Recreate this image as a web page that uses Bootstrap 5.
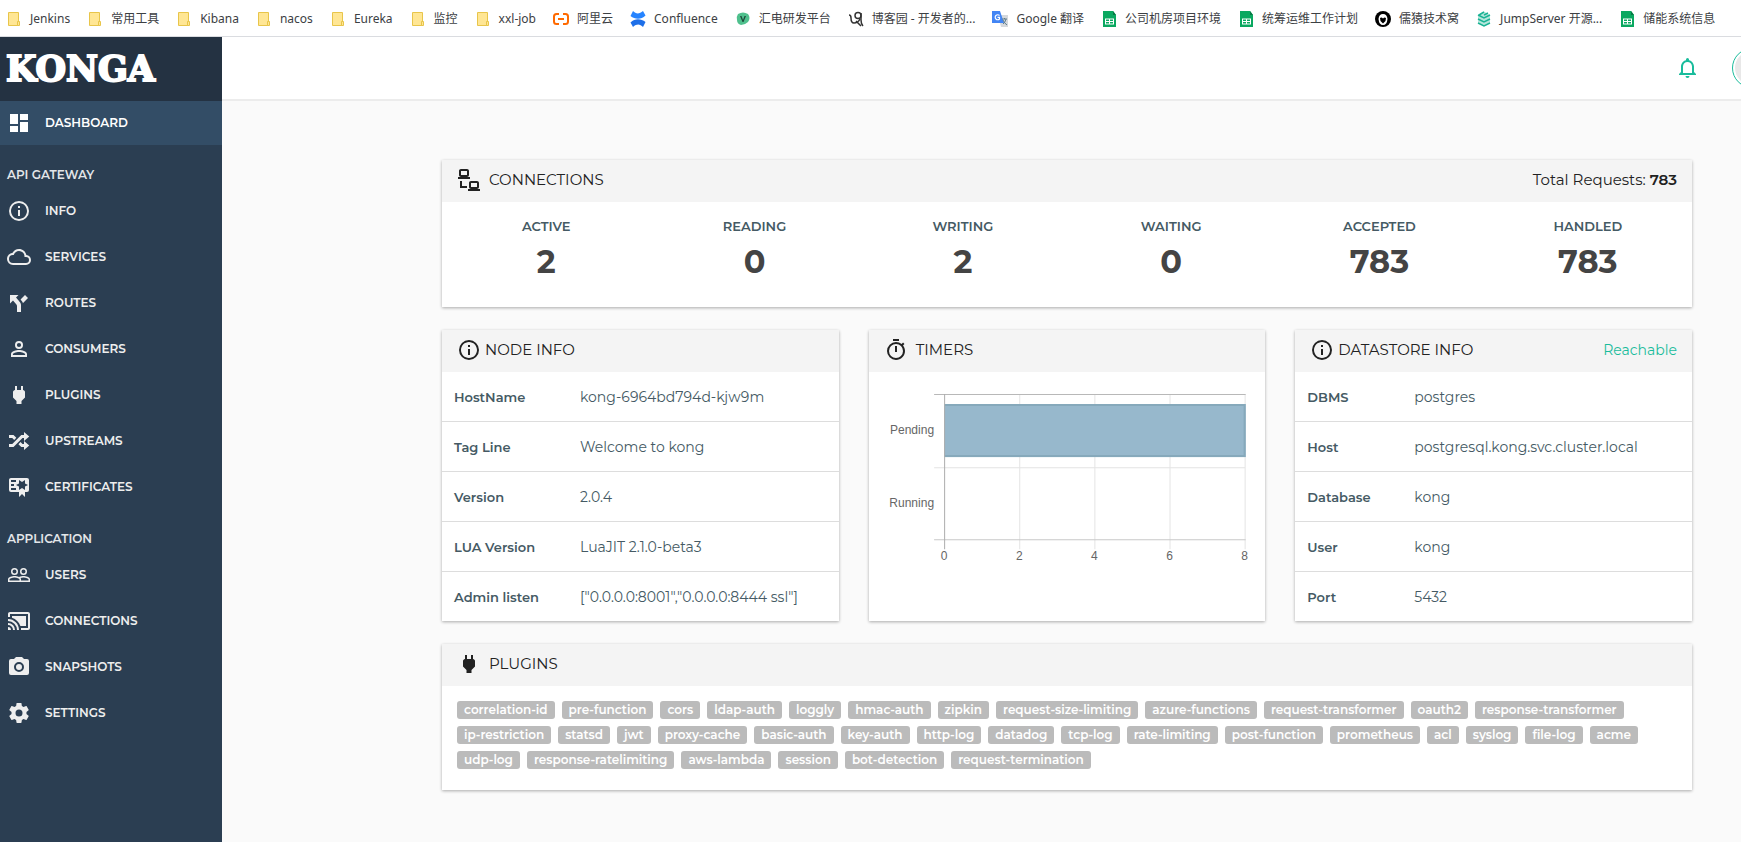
<!DOCTYPE html>
<html lang="en">
<head>
<meta charset="utf-8">
<meta name="viewport" content="width=device-width, initial-scale=1">
<title>Konga - Dashboard</title>
<link href="https://cdn.jsdelivr.net/npm/bootstrap@5.3.0/dist/css/bootstrap.min.css" rel="stylesheet">
<style>
  body { font-family: Montserrat, Inter, "Open Sans", sans-serif; font-size: 14px; line-height: 20px; color: #455a64; background: #fafafa; overflow-x: hidden; }
  a { text-decoration: none; }
  .ico { width: 24px; height: 24px; fill: currentColor; flex: none; }
  .bookmarks { height: 37px; gap: 17px; padding: 1px 6px 0; border-bottom: 1px solid #dadce0; font: 12px/16px "Noto Sans", "Noto Sans CJK SC", sans-serif; overflow: hidden; }
  .bookmarks a { display: flex; align-items: center; gap: 8px; color: #3c4043; white-space: nowrap; }
  .bookmarks svg { width: 16px; height: 16px; flex: none; }
  .sidebar { width: 222px; background: #2b3e52; font-size: 12px; font-weight: 600; flex: none; }
  .brand { height: 64px; padding-left: 6px; background: #243242; color: #fff; font: bold 35px/64px "DejaVu Serif", serif; -webkit-text-stroke: 2px #fff; }
  .sidebar .nav-link { height: 44px; margin-bottom: 2px; padding: 0 7px; gap: 14px; display: flex; align-items: center; color: #eee; }
  .sidebar .nav-link.active { background: #334d66; color: #fff; }
  .section-name { padding: 18px 7px 4px; color: #e3e6e9; }
  .topbar { height: 64px; background: #fff; border-bottom: 2px solid #ececec; overflow: hidden; }
  .topbar button { color: #1abc9c; background: none; border: 0; padding: 0; margin-right: 32px; }
  .avatar { width: 40px; height: 40px; border: 1px solid #1abc9c; border-radius: 50%; padding: 2px; margin-right: -31px; flex: none; }
  .avatar span { display: block; height: 100%; border-radius: 50%; background: #e8e8e8; }
  .content { padding: 59px 49px 40px 220px; gap: 23px; }
  .panel { background: #fff; box-shadow: 0 1px 3px rgba(0,0,0,.32); height: 100%; }
  .panel-head { height: 42px; padding: 0 15px 2px; background: #f4f4f4; color: #222; font-size: 15px; }
  .panel-head h2 { font-size: 15px; line-height: 20px; font-weight: 400; margin: 0; }
  .panel-head b { font-weight: 600; }
  .reachable { color: #1abc9c; font-size: 14px; }
  .stats { padding: 14px 0 29px; font-size: 13px; font-weight: 600; }
  .stat-value { font-size: 32px; line-height: 32px; font-weight: 700; color: #444; margin-top: 10px; }
  .facts th, .facts td { height: 50px; padding: 2px 12px 0; vertical-align: middle; border-top: 1px solid #ddd; }
  .facts tr:first-child > * { border-top: 0; height: 49px; }
  .facts th { font-size: 13px; font-weight: 600; white-space: nowrap; }
  .key-wide { width: 126px; } .key-slim { width: 107px; }
  .facts td { white-space: nowrap; }
  .chart { padding: 15px; }
  .chart svg { display: block; width: 100%; font: 12px "Liberation Sans", Arial, sans-serif; fill: #666; }
  .grid3 { --bs-gutter-x: 30px; --bs-gutter-y: 23px; }
  .tags { padding: 15px 40px 21px 15px; gap: 7px; }
  .tag { background: #bbb; color: #fff; font-size: 12px; line-height: 18px; font-weight: 600; padding: 0 7px; border-radius: 3px; }
</style>
</head>
<body class="d-flex flex-column min-vh-100">
<svg class="d-none">
  <symbol id="i-folder" viewBox="0 0 16 16"><path d="M2.500 1.500h10v13h-10z" fill="#ffe694" stroke="#e8c54a"/><path d="M11.500 10.500h2v4h-2z" fill="#ffe694" stroke="#e8c54a"/></symbol>
  <symbol id="i-sheet" viewBox="0 0 16 16"><path d="M2 0h10l3 4v12H2z" fill="#0aa860"/><path d="M12 0l3 4h-3z" fill="#067a45"/><path d="M4 7.500h9v6H4z" fill="#fff"/><path d="M5 8.500h3v1.600H5zM9 8.500h3v1.600H9zM5 11h3v1.600H5zM9 11h3v1.600H9z" fill="#0aa860"/></symbol>
  <symbol id="i-dash" viewBox="0 0 24 24"><path d="M13,3V9H21V3M13,21H21V11H13M3,21H11V15H3M3,13H11V3H3V13Z"/></symbol>
  <symbol id="i-info" viewBox="0 0 24 24"><path d="M11,9H13V7H11M12,20C7.59,20 4,16.41 4,12C4,7.59 7.59,4 12,4C16.41,4 20,7.59 20,12C20,16.41 16.41,20 12,20M12,2A10,10 0 0,0 2,12A10,10 0 0,0 12,22A10,10 0 0,0 22,12A10,10 0 0,0 12,2M11,17H13V11H11V17Z"/></symbol>
  <symbol id="i-cloud" viewBox="0 0 24 24"><path d="M19,18H6A4,4 0 0,1 2,14A4,4 0 0,1 6,10H6.71C7.37,7.69 9.5,6 12,6A5.5,5.5 0 0,1 17.5,11.5V12H19A3,3 0 0,1 22,15A3,3 0 0,1 19,18M19.35,10.03C18.67,6.59 15.64,4 12,4C9.11,4 6.6,5.64 5.35,8.03C2.34,8.36 0,10.9 0,14A6,6 0 0,0 6,20H19A5,5 0 0,0 24,15C24,12.36 21.95,10.22 19.35,10.03Z"/></symbol>
  <symbol id="i-fork" viewBox="0 0 24 24"><path d="M3,4V12.5L6,9.5L9,13C10,14 10,15 10,15V21H14V14C14,14 14,13 13.47,12C12.94,11 12,10 12,10L9,6.58L11.5,4M18,4L13.54,8.47L14,9C14,9 14.93,10 15.47,11C15.68,11.4 15.8,11.79 15.87,12.13L21,7"/></symbol>
  <symbol id="i-user" viewBox="0 0 24 24"><path d="M12,13C9.33,13 4,14.33 4,17V20H20V17C20,14.33 14.67,13 12,13M12,4A4,4 0 0,0 8,8A4,4 0 0,0 12,12A4,4 0 0,0 16,8A4,4 0 0,0 12,4M12,14.9C14.97,14.9 18.1,16.36 18.1,17V18.1H5.9V17C5.9,16.36 9,14.9 12,14.9M12,5.9A2.1,2.1 0 0,1 14.1,8A2.1,2.1 0 0,1 12,10.1A2.1,2.1 0 0,1 9.9,8A2.1,2.1 0 0,1 12,5.9Z"/></symbol>
  <symbol id="i-plug" viewBox="0 0 24 24"><path d="M16,7V3H14V7H10V3H8V7H8C7,7 6,8 6,9V14.5L9.5,18V21H14.5V18L18,14.5V9C18,8 17,7 16,7Z"/></symbol>
  <symbol id="i-shuffle" viewBox="0 0 24 24"><path d="M17,3L22.25,7.5L17,12L22.25,16.5L17,21V18H14.26L11.44,15.18L13.56,13.06L15.5,15H17V12L17,9H15.5L6.5,18H2V15H5.26L14.26,6H17V3M2,6H6.5L9.32,8.82L7.2,10.94L5.26,9H2V6Z"/></symbol>
  <symbol id="i-cert" viewBox="0 0 24 24"><path d="M4,3C2.89,3 2,3.89 2,5V15A2,2 0 0,0 4,17H12V22L15,19L18,22V17H20A2,2 0 0,0 22,15V8L22,6V5A2,2 0 0,0 20,3H16V3H4M12,5L15,7L18,5V8.5L21,10L18,11.5V15L15,13L12,15V11.5L9,10L12,8.5V5M4,5H9V7H4V5M4,9H7V11H4V9M4,13H9V15H4V13Z"/></symbol>
  <symbol id="i-users" viewBox="0 0 24 24"><path d="M16.5,13C15.3,13 13.43,13.34 12,14C10.57,13.33 8.7,13 7.5,13C5.33,13 1,14.08 1,16.25V19H23V16.25C23,14.08 18.67,13 16.5,13M12.5,17.5H2.5V16.25C2.5,15.71 5.06,14.5 7.5,14.5C9.94,14.5 12.5,15.71 12.5,16.25V17.5M21.5,17.5H14V16.25C14,15.79 13.8,15.39 13.48,15.03C14.36,14.73 15.44,14.5 16.5,14.5C18.94,14.5 21.5,15.71 21.5,16.25V17.5M7.5,12A3.5,3.5 0 0,0 7.5,5A3.5,3.5 0 0,0 7.5,12M7.5,6.500A2,2 0 0,1 7.5,10.500A2,2 0 0,1 7.5,6.500M16.5,12A3.5,3.5 0 0,0 16.5,5A3.5,3.5 0 0,0 16.5,12M16.5,6.500A2,2 0 0,1 16.5,10.500A2,2 0 0,1 16.5,6.500Z"/></symbol>
  <symbol id="i-cast" viewBox="0 0 24 24"><path d="M21,3H3C1.89,3 1,3.89 1,5V8H3V5H21V19H14V21H21A2,2 0 0,0 23,19V5C23,3.89 22.1,3 21,3M1,10V12A9,9 0 0,1 10,21H12C12,14.92 7.07,10 1,10M19,7H5V8.63C8.96,9.91 12.09,13.04 13.37,17H19M1,14V16A5,5 0 0,1 6,21H8A7,7 0 0,0 1,14M1,18V21H4A3,3 0 0,0 1,18Z"/></symbol>
  <symbol id="i-camera" viewBox="0 0 24 24"><path d="M4,4H7L9,2H15L17,4H20A2,2 0 0,1 22,6V18A2,2 0 0,1 20,20H4A2,2 0 0,1 2,18V6A2,2 0 0,1 4,4M12,7A5,5 0 0,0 7,12A5,5 0 0,0 12,17A5,5 0 0,0 17,12A5,5 0 0,0 12,7M12,9A3,3 0 0,1 15,12A3,3 0 0,1 12,15A3,3 0 0,1 9,12A3,3 0 0,1 12,9Z"/></symbol>
  <symbol id="i-gear" viewBox="0 0 24 24"><path d="M12,15.5A3.5,3.5 0 0,1 8.5,12A3.5,3.5 0 0,1 12,8.5A3.5,3.5 0 0,1 15.5,12A3.5,3.5 0 0,1 12,15.5M19.43,12.97C19.47,12.65 19.5,12.33 19.5,12C19.5,11.67 19.47,11.34 19.43,11L21.54,9.37C21.73,9.22 21.78,8.95 21.66,8.73L19.66,5.27C19.54,5.05 19.27,4.96 19.05,5.05L16.56,6.05C16.04,5.66 15.5,5.32 14.87,5.07L14.5,2.42C14.46,2.18 14.25,2 14,2H10C9.75,2 9.54,2.18 9.5,2.42L9.13,5.07C8.5,5.32 7.96,5.66 7.44,6.05L4.95,5.05C4.73,4.96 4.46,5.05 4.34,5.27L2.34,8.73C2.21,8.95 2.27,9.22 2.46,9.37L4.57,11C4.53,11.34 4.5,11.67 4.5,12C4.5,12.33 4.53,12.65 4.57,12.97L2.46,14.63C2.27,14.78 2.21,15.05 2.34,15.27L4.34,18.73C4.46,18.95 4.73,19.03 4.95,18.95L7.44,17.94C7.96,18.34 8.5,18.68 9.13,18.93L9.5,21.58C9.54,21.82 9.75,22 10,22H14C14.25,22 14.46,21.82 14.5,21.58L14.87,18.93C15.5,18.67 16.04,18.34 16.56,17.94L19.05,18.95C19.27,19.03 19.54,18.95 19.66,18.73L21.66,15.27C21.78,15.05 21.73,14.78 21.54,14.63L19.43,12.97Z"/></symbol>
  <symbol id="i-lan" viewBox="0 0 24 24"><path d="M4,1C2.89,1 2,1.89 2,3V7C2,8.11 2.89,9 4,9H1V11H13V9H10C11.11,9 12,8.11 12,7V3C12,1.89 11.11,1 10,1H4M4,3H10V7H4V3M3,13V18L3,20H10V18H5V13H3M14,13C12.89,13 12,13.89 12,15V19C12,20.11 12.89,21 14,21H11V23H23V21H20C21.11,21 22,20.11 22,19V15C22,13.89 21.11,13 20,13H14M14,15H20V19H14V15Z"/></symbol>
  <symbol id="i-timer" viewBox="0 0 24 24"><path d="M12,20A7,7 0 0,1 5,13A7,7 0 0,1 12,6A7,7 0 0,1 19,13A7,7 0 0,1 12,20M19.03,7.39L20.45,5.97C20,5.46 19.55,5 19.04,4.56L17.62,6C16.07,4.74 14.12,4 12,4A9,9 0 0,0 3,13A9,9 0 0,0 12,22C17,22 21,17.97 21,13C21,10.88 20.26,8.93 19.03,7.39M11,14H13V8H11M15,1H9V3H15V1Z"/></symbol>
  <symbol id="i-bell" viewBox="0 0 24 24"><path d="M16,17H7V10.5C7,8 9,6 11.5,6C14,6 16,8 16,10.5M18,16V10.5C18,7.43 15.86,4.86 13,4.18V3.5A1.5,1.5 0 0,0 11.5,2A1.5,1.5 0 0,0 10,3.5V4.18C7.13,4.86 5,7.43 5,10.5V16L3,18V19H20V18M11.5,22A2,2 0 0,0 13.5,20H9.5A2,2 0 0,0 11.5,22Z"/></symbol>
</svg>

<nav class="bookmarks d-flex align-items-center bg-white" aria-label="Bookmarks">
  <a href="#"><svg><use href="#i-folder"/></svg>Jenkins</a>
  <a href="#"><svg><use href="#i-folder"/></svg>常用工具</a>
  <a href="#"><svg><use href="#i-folder"/></svg>Kibana</a>
  <a href="#"><svg><use href="#i-folder"/></svg>nacos</a>
  <a href="#"><svg><use href="#i-folder"/></svg>Eureka</a>
  <a href="#"><svg><use href="#i-folder"/></svg>监控</a>
  <a href="#"><svg><use href="#i-folder"/></svg>xxl-job</a>
  <a href="#"><svg viewBox="0 0 16 16" fill="none" stroke="#ff6a00" stroke-width="2"><path d="M6 3H3.500Q1 3 1 5.500v5Q1 13 3.500 13H6M10 3h2.500Q15 3 15 5.500v5Q15 13 12.500 13H10M5 8h6"/></svg>阿里云</a>
  <a href="#"><svg viewBox="0 0 16 16"><path d="M3 0C6 3 9 3.500 13 0l2.500 4.500C11 9 5 8.500 .5 5z" fill="#2684ff"/><path d="M13 16C10 13 7 12.500 3 16L.5 11.500c4.500-4.500 10.500-4 15-.5z" fill="#1e6fe8"/></svg>Confluence</a>
  <a href="#"><svg viewBox="0 0 16 16"><path d="M3 3Q8 0 13 3q3 4 0 8-3 3-7 3-4-1-4-5-1-3 1-6z" fill="#4fc08d"/><path d="M5 5l2.500 6h1L11 5H9.500L8 9 6.500 5z" fill="#1f4a3c"/></svg>汇电研发平台</a>
  <a href="#"><svg viewBox="0 0 16 16" fill="none" stroke="#333" stroke-width="1.500"><path d="M1 4q2 0 2 3 0 5 3 5 4 0 6-4"/><circle cx="10" cy="4.500" r="3"/><path d="M13 2v7q0 4 2 6M8 10l5 5" /></svg>博客园 - 开发者的...</a>
  <a href="#"><svg viewBox="0 0 16 16"><path d="M6 4h10v12H9z" fill="#d5d8dc"/><path d="M0 0h8l4 12H0z" fill="#4285f4"/><path d="M7.500 4.500A2.500 2.500 0 1 0 7.500 8V6.300H5.500" fill="none" stroke="#fff" stroke-width="1.200"/><path d="M10 8h5M12.500 7v1M14 8q-1 4-3 5M11 9q1 3 4 5" stroke="#607d8b" fill="none"/></svg>Google 翻译</a>
  <a href="#"><svg><use href="#i-sheet"/></svg>公司机房项目环境</a>
  <a href="#"><svg><use href="#i-sheet"/></svg>统筹运维工作计划</a>
  <a href="#"><svg viewBox="0 0 16 16"><circle cx="8" cy="8" r="8"/><path d="M3.500 8Q4 3 8 3t4.500 5Q12 14 8 14T3.500 8z" fill="#fff"/><path d="M5 7q1.500-1 3 .500Q9.500 6 11 7l-.5 3L8 12.500 5.500 10z"/></svg>儒猿技术窝</a>
  <a href="#"><svg viewBox="0 0 16 16" fill="none" stroke="#1ab394" stroke-width="1.500"><path d="M8 .500l6 3.500v8l-6 3.500L2 12V4z" fill="#b5e6dc" stroke="none"/><path d="M2 4l6 3 6-3M8 1L3 4M8 4l4-2M2 8l6 3 6-3M2 12l6 3 6-3"/></svg>JumpServer 开源...</a>
  <a href="#"><svg><use href="#i-sheet"/></svg>储能系统信息</a>
</nav>

<div class="d-flex flex-grow-1">
  <aside class="sidebar">
    <div class="brand">KONGA</div>
    <nav class="nav flex-column flex-nowrap">
      <a class="nav-link active" href="#"><svg class="ico"><use href="#i-dash"/></svg>DASHBOARD</a>
      <div class="section-name">API GATEWAY</div>
      <a class="nav-link" href="#"><svg class="ico"><use href="#i-info"/></svg>INFO</a>
      <a class="nav-link" href="#"><svg class="ico"><use href="#i-cloud"/></svg>SERVICES</a>
      <a class="nav-link" href="#"><svg class="ico"><use href="#i-fork"/></svg>ROUTES</a>
      <a class="nav-link" href="#"><svg class="ico"><use href="#i-user"/></svg>CONSUMERS</a>
      <a class="nav-link" href="#"><svg class="ico"><use href="#i-plug"/></svg>PLUGINS</a>
      <a class="nav-link" href="#"><svg class="ico"><use href="#i-shuffle"/></svg>UPSTREAMS</a>
      <a class="nav-link" href="#"><svg class="ico"><use href="#i-cert"/></svg>CERTIFICATES</a>
      <div class="section-name">APPLICATION</div>
      <a class="nav-link" href="#"><svg class="ico"><use href="#i-users"/></svg>USERS</a>
      <a class="nav-link" href="#"><svg class="ico"><use href="#i-cast"/></svg>CONNECTIONS</a>
      <a class="nav-link" href="#"><svg class="ico"><use href="#i-camera"/></svg>SNAPSHOTS</a>
      <a class="nav-link" href="#"><svg class="ico"><use href="#i-gear"/></svg>SETTINGS</a>
    </nav>
  </aside>

  <div class="flex-grow-1 overflow-hidden">
    <header class="topbar d-flex align-items-center justify-content-end">
      <button type="button" aria-label="Notifications"><svg class="ico d-block"><use href="#i-bell"/></svg></button>
      <a class="avatar" href="#" aria-label="Account"><span></span></a>
    </header>

    <main class="content d-flex flex-column">
      <section>
        <div class="panel">
          <div class="panel-head d-flex align-items-center gap-2"><svg class="ico"><use href="#i-lan"/></svg><h2>CONNECTIONS</h2><span class="ms-auto">Total Requests: <b>783</b></span></div>
          <div class="stats row g-0 text-center">
            <div class="col">ACTIVE<div class="stat-value">2</div></div>
            <div class="col">READING<div class="stat-value">0</div></div>
            <div class="col">WRITING<div class="stat-value">2</div></div>
            <div class="col">WAITING<div class="stat-value">0</div></div>
            <div class="col">ACCEPTED<div class="stat-value">783</div></div>
            <div class="col">HANDLED<div class="stat-value">783</div></div>
          </div>
        </div>
      </section>

      <section>
        <div class="row grid3 row-cols-1 row-cols-lg-3 mt-0">
          <div class="col mt-0">
            <div class="panel">
              <div class="panel-head d-flex align-items-center gap-1"><svg class="ico"><use href="#i-info"/></svg><h2>NODE INFO</h2></div>
              <table class="facts w-100">
                <tr><th class="key-wide" scope="row">HostName</th><td>kong-6964bd794d-kjw9m</td></tr>
                <tr><th scope="row">Tag Line</th><td>Welcome to kong</td></tr>
                <tr><th scope="row">Version</th><td>2.0.4</td></tr>
                <tr><th scope="row">LUA Version</th><td>LuaJIT 2.1.0-beta3</td></tr>
                <tr><th scope="row">Admin listen</th><td>["0.0.0.0:8001","0.0.0.0:8444 ssl"]</td></tr>
              </table>
            </div>
          </div>
          <div class="col mt-0">
            <div class="panel">
              <div class="panel-head d-flex align-items-center gap-2"><svg class="ico"><use href="#i-timer"/></svg><h2>TIMERS</h2></div>
              <div class="chart">
                <svg viewBox="0 0 366 190" role="img" aria-label="Timers: 8 pending, 0 running">
                  <g fill="none" stroke="#e4e4e4"><path d="M135.500 7V162M210.500 7V162M285.500 7V162M360.500 7V162M50 80.500H361"/></g>
                  <path d="M50 152.500H361" stroke="#c8c8c8"/>
                  <path d="M50 7.500H361" stroke="#b8b8b8"/>
                  <rect x="60" y="17" width="301" height="53" fill="#97b8cc"/>
                  <path d="M61 18H360V69H61" fill="none" stroke="#86a9bb" stroke-width="2"/>
                  <path d="M60.500 7V162" stroke="#adadad"/>
                  <text x="50" y="47" text-anchor="end">Pending</text>
                  <text x="50" y="120" text-anchor="end">Running</text>
                  <g text-anchor="middle"><text x="60" y="173">0</text><text x="135" y="173">2</text><text x="210" y="173">4</text><text x="285" y="173">6</text><text x="360" y="173">8</text></g>
                </svg>
              </div>
            </div>
          </div>
          <div class="col mt-0">
            <div class="panel">
              <div class="panel-head d-flex align-items-center gap-1"><svg class="ico"><use href="#i-info"/></svg><h2>DATASTORE INFO</h2><span class="ms-auto reachable">Reachable</span></div>
              <table class="facts w-100">
                <tr><th class="key-slim" scope="row">DBMS</th><td>postgres</td></tr>
                <tr><th scope="row">Host</th><td>postgresql.kong.svc.cluster.local</td></tr>
                <tr><th scope="row">Database</th><td>kong</td></tr>
                <tr><th scope="row">User</th><td>kong</td></tr>
                <tr><th scope="row">Port</th><td>5432</td></tr>
              </table>
            </div>
          </div>
        </div>
      </section>

      <section>
        <div class="panel">
          <div class="panel-head d-flex align-items-center gap-2"><svg class="ico"><use href="#i-plug"/></svg><h2>PLUGINS</h2></div>
          <div class="tags d-flex flex-wrap">
            <span class="tag">correlation-id</span><span class="tag">pre-function</span><span class="tag">cors</span><span class="tag">ldap-auth</span><span class="tag">loggly</span><span class="tag">hmac-auth</span><span class="tag">zipkin</span><span class="tag">request-size-limiting</span><span class="tag">azure-functions</span><span class="tag">request-transformer</span><span class="tag">oauth2</span><span class="tag">response-transformer</span>
            <span class="tag">ip-restriction</span><span class="tag">statsd</span><span class="tag">jwt</span><span class="tag">proxy-cache</span><span class="tag">basic-auth</span><span class="tag">key-auth</span><span class="tag">http-log</span><span class="tag">datadog</span><span class="tag">tcp-log</span><span class="tag">rate-limiting</span><span class="tag">post-function</span><span class="tag">prometheus</span><span class="tag">acl</span><span class="tag">syslog</span><span class="tag">file-log</span><span class="tag">acme</span>
            <span class="tag">udp-log</span><span class="tag">response-ratelimiting</span><span class="tag">aws-lambda</span><span class="tag">session</span><span class="tag">bot-detection</span><span class="tag">request-termination</span>
          </div>
        </div>
      </section>
    </main>
  </div>
</div>
<script src="https://cdn.jsdelivr.net/npm/bootstrap@5.3.0/dist/js/bootstrap.bundle.min.js"></script>
</body>
</html>
